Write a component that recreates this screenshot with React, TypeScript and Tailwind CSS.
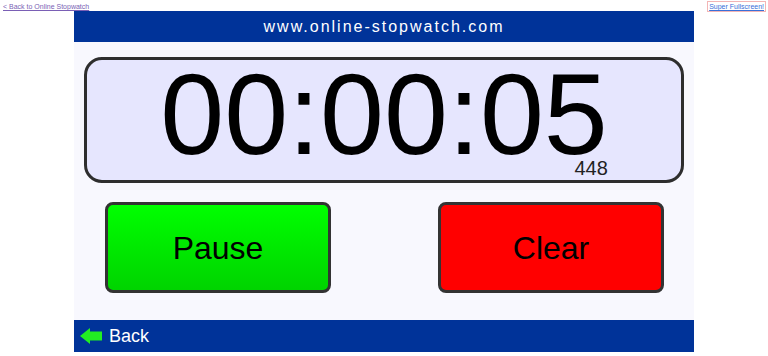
const BackArrow = () => (
  <svg width="22" height="16" viewBox="0 0 22 16" className="shrink-0">
    <polygon points="0,8 10,0 10,3.5 22,3.5 22,12.5 10,12.5 10,16" fill="#22ee22" />
  </svg>
);

export default function App() {
  return (
    <div className="relative h-[356px] w-[768px] overflow-hidden bg-white font-['Liberation_Sans',Arial,sans-serif]">
      <div className="flex h-[11px] items-start justify-between">
        <a href="#" className="ml-[3px] mt-[2px] text-[7px] leading-[9px] text-[#7a5fb5] underline">
          &lt; Back to Online Stopwatch
        </a>
        <a
          href="#"
          className="mr-[2px] mt-[1px] border border-[#f3b5b5] px-[1px] text-[7px] leading-[9px] text-[#3a6fd8] underline"
        >
          Super Fullscreen!
        </a>
      </div>

      <div className="mx-auto w-[620px] bg-[#f8f8fe]">
        <div className="flex h-[31px] items-center justify-center bg-[#003399] text-[16px] tracking-[2px] text-white">
          www.online-stopwatch.com
        </div>

        <div className="px-[10px] pt-[15px]">
          <div className="flex h-[126px] items-center justify-center rounded-[18px] border-[3px] border-[#2e2e2e] bg-[#e6e6fe]">
            <div className="relative -mt-[12px] text-[115px] leading-none text-black">
              00:00:05
              <span className="absolute -bottom-[6px] right-0 text-[20px] leading-none text-[#222]">448</span>
            </div>
          </div>
        </div>

        <div className="flex justify-between pl-[31px] pr-[30px] pt-[19px] pb-[27px]">
          <button className="flex h-[91px] w-[226px] items-center justify-center rounded-[8px] border-[3px] border-[#333] bg-gradient-to-b from-[#00ff00] to-[#00d400] text-[32px] text-black">
            Pause
          </button>
          <button className="flex h-[91px] w-[226px] items-center justify-center rounded-[8px] border-[3px] border-[#333] bg-[#ff0000] text-[32px] text-black">
            Clear
          </button>
        </div>

        <div className="flex h-[32px] items-center gap-[7px] bg-[#003399] pl-[6px] text-[18px] text-white">
          <BackArrow />
          <span>Back</span>
        </div>
      </div>
    </div>
  );
}
